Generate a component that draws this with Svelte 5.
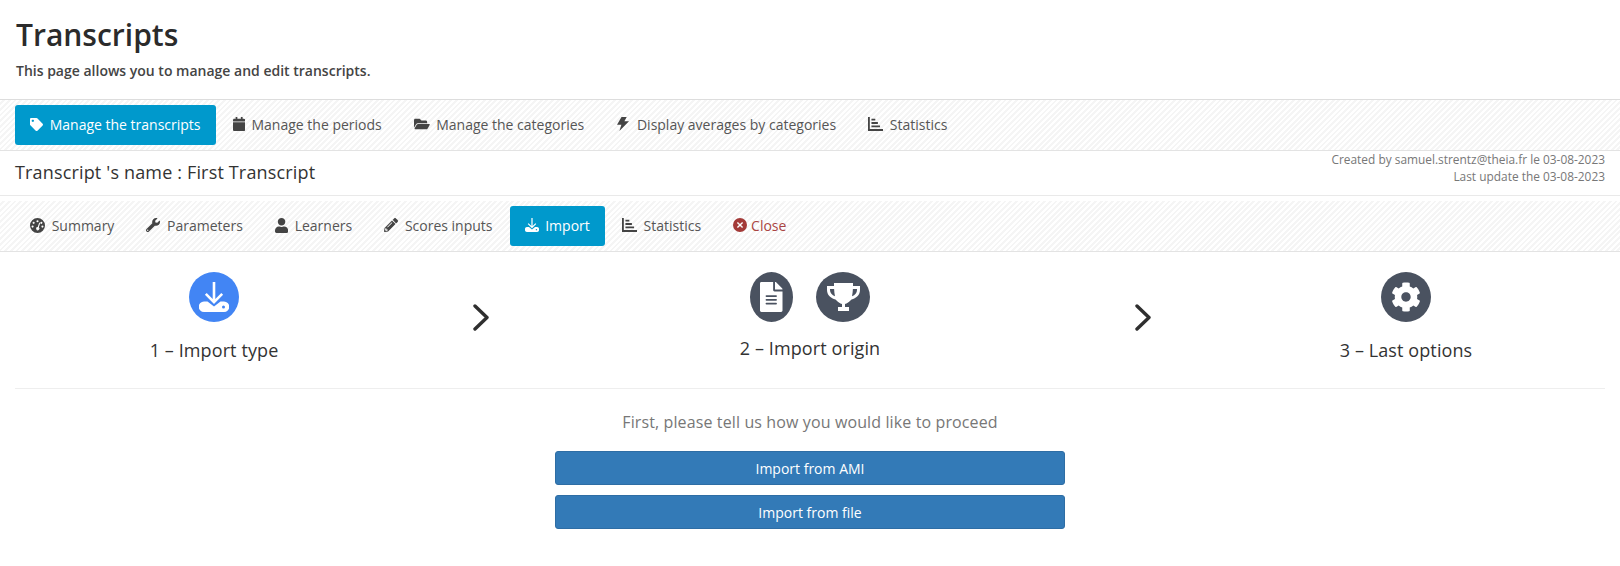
<script>
	const paths = {
		tag: 'M0 252.118V48C0 21.49 21.49 0 48 0h204.118a48 48 0 0 1 33.941 14.059l211.882 211.882c18.745 18.745 18.745 49.137 0 67.882L293.823 497.941c-18.745 18.745-49.137 18.745-67.882 0L14.059 286.059A48 48 0 0 1 0 252.118zM112 64c-26.51 0-48 21.49-48 48s21.49 48 48 48 48-21.49 48-48-21.49-48-48-48z',
		calendar: 'M12 192h424c6.6 0 12 5.4 12 12v260c0 26.5-21.5 48-48 48H48c-26.5 0-48-21.5-48-48V204c0-6.6 5.4-12 12-12zm436-44v-36c0-26.5-21.5-48-48-48h-48V12c0-6.6-5.4-12-12-12h-40c-6.6 0-12 5.4-12 12v52H160V12c0-6.6-5.4-12-12-12h-40c-6.6 0-12 5.4-12 12v52H48C21.5 64 0 85.5 0 112v36c0 6.6 5.4 12 12 12h424c6.6 0 12-5.4 12-12z',
		folder: 'M572.694 292.093L500.27 416.248A63.997 63.997 0 0 1 444.989 448H45.025c-18.523 0-30.064-20.093-20.731-36.093l72.424-124.155A64 64 0 0 1 152 256h399.964c18.523 0 30.064 20.093 20.73 36.093zM152 224h328v-48c0-26.51-21.49-48-48-48H272l-64-64H48C21.49 64 0 85.49 0 112v278.046l69.077-118.418C86.214 242.25 117.989 224 152 224z',
		bolt: 'M5.5 0h5.2L8.4 4.2H13L3.4 14 5.4 7.8H1z',
		chart: 'M0 0h1.7v11.2H14V13H0zM3.2 1.6h3.6v1.7H3.2zM3.2 4.7h6v1.7H3.2zM3.2 7.9h8v1.7H3.2z',
		gauge: 'M8 1a7 7 0 1 0 0 14A7 7 0 0 0 8 1zM8 3a1 1 0 1 1 0 2 1 1 0 0 1 0-2zM4.4 4.5a1 1 0 1 1 0 2 1 1 0 0 1 0-2zM11.6 4.5a1 1 0 1 1 0 2 1 1 0 0 1 0-2zM3.4 8a1 1 0 1 1 0 2 1 1 0 0 1 0-2zM12.6 8a1 1 0 1 1 0 2 1 1 0 0 1 0-2zM9.6 5.2l1 .4-1.4 4.1a1.5 1.5 0 1 1-1-.3z',
		wrench: 'M507.73 109.1c-2.24-9.03-13.54-12.09-20.12-5.51l-74.36 74.36-67.88-11.31-11.31-67.88 74.36-74.36c6.62-6.62 3.43-17.9-5.66-20.16-47.38-11.74-99.55.91-136.58 37.93-39.64 39.64-50.55 97.1-34.05 147.2L18.74 402.76c-24.99 24.99-24.99 65.51 0 90.5 24.99 24.99 65.51 24.99 90.5 0l213.21-213.21c50.12 16.71 107.47 5.68 147.37-34.22 37.07-37.07 49.7-89.32 37.91-136.73zM64 472c-13.25 0-24-10.75-24-24 0-13.26 10.75-24 24-24s24 10.74 24 24c0 13.25-10.75 24-24 24z',
		user: 'M224 256c70.7 0 128-57.3 128-128S294.7 0 224 0 96 57.3 96 128s57.3 128 128 128zm89.6 32h-16.7c-22.2 10.2-46.9 16-72.9 16s-50.6-5.8-72.9-16h-16.7C60.2 288 0 348.2 0 422.4V464c0 26.5 21.5 48 48 48h352c26.5 0 48-21.5 48-48v-41.6c0-74.2-60.2-134.4-134.4-134.4z',
		pencil: 'M497.9 142.1l-46.1 46.1c-4.7 4.7-12.3 4.7-17 0l-111-111c-4.7-4.7-4.7-12.3 0-17l46.1-46.1c18.7-18.7 49.1-18.7 67.9 0l60.1 60.1c18.8 18.7 18.8 49.1 0 67.9zM284.2 99.8L21.6 362.4.4 483.9c-2.9 16.4 11.4 30.6 27.8 27.8l121.5-21.3 262.6-262.6c4.7-4.7 4.7-12.3 0-17l-111-111c-4.8-4.7-12.4-4.7-17.1 0zM124.1 339.9c-5.5-5.5-5.5-14.3 0-19.8l154-154c5.5-5.5 14.3-5.5 19.8 0s5.5 14.3 0 19.8l-154 154c-5.5 5.5-14.3 5.5-19.8 0zM88 424h48v36.3l-64.5 11.3-31.1-31.1L51.7 376H88v48z',
		download: 'M13.7 0h2.6v17l6-6 1.8 1.8L15 22 5.9 12.8 7.7 11l6 6zM5 19.5h3.5l6.5 5 6.5-5H25a5.2 5.2 0 0 1 0 10.5H5a5.2 5.2 0 0 1 0-10.5zM24.5 23.5a1.5 1.5 0 1 0 0 3 1.5 1.5 0 0 0 0-3z',
		close: 'M8 1a7 7 0 1 0 0 14A7 7 0 0 0 8 1zM5.9 4.9L8 7l2.1-2.1 1 1L9 8l2.1 2.1-1 1L8 9l-2.1 2.1-1-1L7 8 4.9 5.9z',
		file: 'M224 136V0H24C10.7 0 0 10.7 0 24v464c0 13.3 10.7 24 24 24h336c13.3 0 24-10.7 24-24V160H248c-13.2 0-24-10.8-24-24zm64 236c0 6.6-5.4 12-12 12H108c-6.6 0-12-5.4-12-12v-8c0-6.6 5.4-12 12-12h168c6.6 0 12 5.4 12 12v8zm0-64c0 6.6-5.4 12-12 12H108c-6.6 0-12-5.4-12-12v-8c0-6.6 5.4-12 12-12h168c6.6 0 12 5.4 12 12v8zm0-72v8c0 6.6-5.4 12-12 12H108c-6.6 0-12-5.4-12-12v-8c0-6.6 5.4-12 12-12h168c6.6 0 12 5.4 12 12zm96-114.1v6.1H256V0h6.1c6.4 0 12.5 2.5 17 7l97.9 98c4.5 4.5 7 10.6 7 16.9z',
		trophy: 'M7 0h19v3h7v4c0 5-4 8.5-8.5 9.5C22 19 20 20.5 18 21v3h4v4H11v-4h4v-3c-2-.5-4-2-6.5-4.5C4 15.5 0 12 0 7V3h7zM3 6v1c0 3 2 5 5 6.3C7.5 11 7.2 8.5 7.1 6zM30 6h-4.1c-.1 2.5-.4 5-.9 7.3 3-1.3 5-3.3 5-6.3z',
		cog: 'M487.4 315.7l-42.6-24.6c4.3-23.2 4.3-47 0-70.2l42.6-24.6c4.9-2.8 7.1-8.6 5.5-14-11.1-35.6-30-67.8-54.7-94.6-3.8-4.1-10-5.1-14.8-2.3L380.8 110c-17.9-15.4-38.5-27.3-60.8-35.1V25.8c0-5.6-3.9-10.5-9.4-11.7-36.7-8.2-74.3-7.8-109.2 0-5.5 1.2-9.4 6.1-9.4 11.7V75c-22.2 7.9-42.8 19.8-60.8 35.1L88.7 85.5c-4.9-2.8-11-1.9-14.8 2.3-24.7 26.7-43.6 58.9-54.7 94.6-1.7 5.4.6 11.2 5.5 14L67.3 221c-4.3 23.2-4.3 47 0 70.2l-42.6 24.6c-4.9 2.8-7.1 8.6-5.5 14 11.1 35.6 30 67.8 54.7 94.6 3.8 4.1 10 5.1 14.8 2.3l42.6-24.6c17.9 15.4 38.5 27.3 60.8 35.1v49.2c0 5.6 3.9 10.5 9.4 11.7 36.7 8.2 74.3 7.8 109.2 0 5.5-1.2 9.4-6.1 9.4-11.7v-49.2c22.2-7.9 42.8-19.8 60.8-35.1l42.6 24.6c4.9 2.8 11 1.9 14.8-2.3 24.7-26.7 43.6-58.9 54.7-94.6 1.5-5.5-.7-11.3-5.6-14.1zM256 336c-44.1 0-80-35.9-80-80s35.9-80 80-80 80 35.9 80 80-35.9 80-80 80z'
	};

	const boxes = {
		tag: '0 0 512 512',
		calendar: '0 0 448 512',
		folder: '0 0 576 512',
		bolt: '0 0 14 14',
		chart: '0 0 14 13',
		gauge: '1 1 14 14',
		wrench: '0 0 512 512',
		user: '0 0 448 512',
		pencil: '0 0 512 512',
		download: '0 0 30 30',
		close: '1 1 14 14',
		file: '0 0 384 512',
		trophy: '0 0 33 28',
		cog: '0 0 512 512'
	};

	const mainNav = [
		{ label: 'Manage the transcripts', icon: 'tag', active: true },
		{ label: 'Manage the periods', icon: 'calendar' },
		{ label: 'Manage the categories', icon: 'folder' },
		{ label: 'Display averages by categories', icon: 'bolt' },
		{ label: 'Statistics', icon: 'chart' }
	];

	const subNav = [
		{ label: 'Summary', icon: 'gauge' },
		{ label: 'Parameters', icon: 'wrench' },
		{ label: 'Learners', icon: 'user' },
		{ label: 'Scores inputs', icon: 'pencil' },
		{ label: 'Import', icon: 'download', active: true },
		{ label: 'Statistics', icon: 'chart' },
		{ label: 'Close', icon: 'close', danger: true }
	];
</script>

{#snippet icon(name)}
	<svg class="ico ico-{name}" viewBox={boxes[name]} aria-hidden="true">
		<path fill-rule="evenodd" d={paths[name]} />
	</svg>
{/snippet}

{#snippet nav(items)}
	{#each items as item}
		<a href="#top" class="tab" class:active={item.active} class:danger={item.danger}>
			{@render icon(item.icon)}
			<span>{item.label}</span>
		</a>
	{/each}
{/snippet}

{#snippet chevron()}
	<svg class="chevron" viewBox="0 0 16 27" aria-hidden="true">
		<path d="M2 2l12 11.500L2 25" />
	</svg>
{/snippet}

<header class="head">
	<h1>Transcripts</h1>
	<p>This page allows you to manage and edit transcripts.</p>
</header>

<nav class="bar">
	{@render nav(mainNav)}
</nav>

<div class="name-row">
	<h2>Transcript 's name : First Transcript</h2>
	<div class="meta">
		<div>Created by samuel.strentz@theia.fr le 03-08-2023</div>
		<div>Last update the 03-08-2023</div>
	</div>
</div>

<nav class="bar sub">
	{@render nav(subNav)}
</nav>

<section class="steps">
	<div class="step">
		<div class="bubbles">
			<span class="bubble current">{@render icon('download')}</span>
		</div>
		<div class="step-label">1 – Import type</div>
	</div>
	<div class="arrow first">{@render chevron()}</div>
	<div class="step second">
		<div class="bubbles">
			<span class="bubble narrow">{@render icon('file')}</span>
			<span class="bubble wide">{@render icon('trophy')}</span>
		</div>
		<div class="step-label">2 – Import origin</div>
	</div>
	<div class="arrow last">{@render chevron()}</div>
	<div class="step">
		<div class="bubbles">
			<span class="bubble">{@render icon('cog')}</span>
		</div>
		<div class="step-label">3 – Last options</div>
	</div>
</section>

<section class="choice">
	<p>First, please tell us how you would like to proceed</p>
	<button type="button">Import from AMI</button>
	<button type="button">Import from file</button>
</section>

<style>
	:global(body) {
		font-family: 'Open Sans', sans-serif;
		font-size: 14px;
		color: #333;
		background: #fff;
	}
	.head {
		height: 100px;
		box-sizing: border-box;
		padding: 15px 16px 0;
		border-bottom: 1px solid #ddd;
	}
	h1 {
		margin: 0;
		font-size: 30px;
		line-height: 40px;
		font-weight: 600;
		color: #2b2b2b;
	}
	.head p {
		margin: 7px 0 0;
		font-size: 14px;
		line-height: 18px;
		font-weight: 600;
		color: #444;
	}
	.bar {
		display: flex;
		align-items: center;
		gap: 2px;
		height: 51px;
		box-sizing: border-box;
		padding: 0 15px;
		border-bottom: 1px solid #e3e3e3;
		background: repeating-linear-gradient(135deg, #fff 0 2px, #f5f5f5 2px 4px);
	}
	.tab {
		display: flex;
		align-items: center;
		gap: 6.7px;
		height: 40px;
		box-sizing: border-box;
		padding: 0 15px 2px;
		border-radius: 3px;
		color: #555;
		font-size: 14px;
		text-decoration: none;
	}
	.tab.active {
		background: #0099cc;
		color: #fff;
	}
	.tab.danger {
		color: #a94442;
		gap: 4px;
	}
	.ico {
		display: block;
		height: 14px;
		width: auto;
		flex: none;
		fill: #444;
	}
	.ico-tag {
		height: 13px;
	}
	.ico-gauge,
	.ico-user {
		height: 15px;
	}
	.active .ico {
		fill: #fff;
	}
	.danger .ico {
		fill: #a33a38;
	}
	.name-row {
		display: flex;
		justify-content: space-between;
		height: 45px;
		box-sizing: border-box;
		padding: 0 15px;
		margin-bottom: 5px;
		border-bottom: 1px solid #e9e9e9;
	}
	h2 {
		margin: 9px 0 0;
		font-size: 18px;
		line-height: 24px;
		font-weight: 400;
		letter-spacing: 0.16px;
		color: #333;
	}
	.meta {
		text-align: right;
		font-size: 11.9px;
		line-height: 17px;
		color: #777;
	}
	.steps {
		display: grid;
		grid-template-columns: 398px 199px 396px 199px 398px;
		margin: 0 15px;
		height: 137px;
		box-sizing: border-box;
		padding-top: 20px;
		border-bottom: 1px solid #eee;
	}
	.step {
		text-align: center;
	}
	.bubbles {
		display: flex;
		justify-content: center;
		gap: 23px;
	}
	.bubble {
		display: flex;
		align-items: center;
		justify-content: center;
		width: 50px;
		height: 50px;
		border-radius: 50%;
		background: #4a5260;
	}
	.bubble.current {
		background: #4285f4;
	}
	.bubble.narrow {
		width: 43px;
	}
	.bubble.wide {
		width: 54px;
	}
	.bubble .ico {
		fill: #fff;
		height: 30px;
	}
	.bubble .ico-trophy {
		height: 28px;
	}
	.step-label {
		margin-top: 16px;
		font-size: 18px;
		line-height: 25px;
		letter-spacing: 0.1px;
		color: #333;
	}
	.second .step-label {
		margin-top: 14px;
	}
	.arrow {
		padding-top: 32px;
	}
	.arrow.first {
		padding-left: 60px;
	}
	.arrow.last {
		padding-left: 127px;
	}
	.chevron {
		display: block;
		width: 16px;
		height: 27px;
		fill: none;
		stroke: #2f2f2f;
		stroke-width: 3.4;
		stroke-linecap: round;
		stroke-linejoin: round;
	}
	.choice {
		display: flex;
		flex-direction: column;
		align-items: center;
		gap: 10px;
	}
	.choice p {
		margin: 22px 0 8px;
		font-size: 16px;
		line-height: 22px;
		letter-spacing: 0.12px;
		color: #777;
	}
	button {
		width: 510px;
		height: 34px;
		padding: 0;
		border: 1px solid #2e6da4;
		border-radius: 3px;
		background: #337ab7;
		color: #fff;
		font: 14px 'Open Sans', sans-serif;
	}
</style>
